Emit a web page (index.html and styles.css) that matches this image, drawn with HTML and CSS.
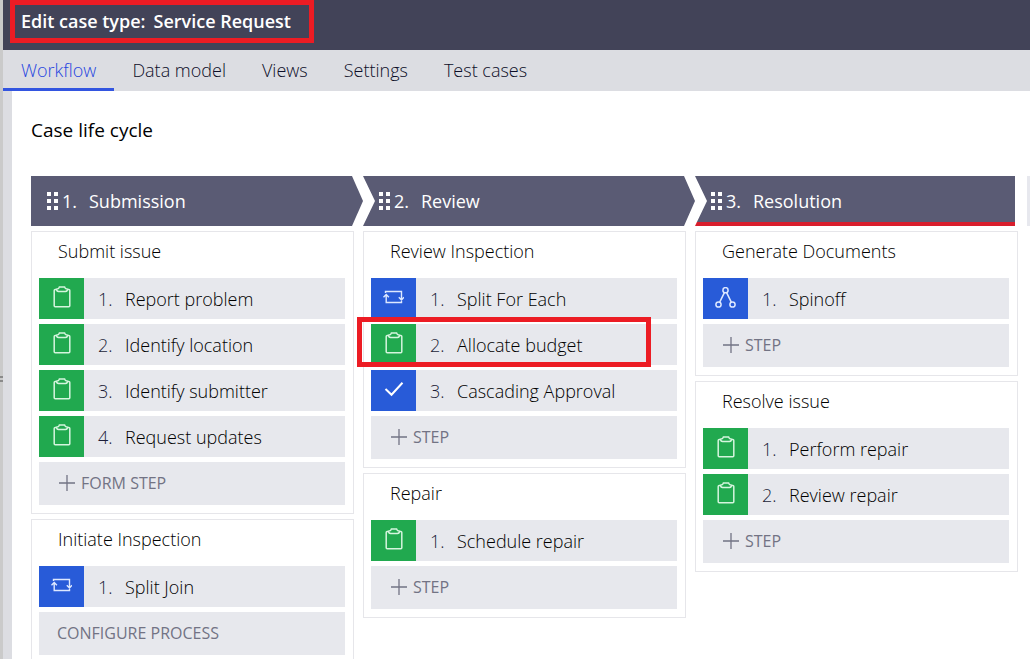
FILE: index.html
```html
<!DOCTYPE html>
<html lang="en">
<head>
    <meta charset="UTF-8">
    <meta name="viewport" content="width=device-width, initial-scale=1.0">
    <title>Edit case type: Service Request</title>
    <link rel="stylesheet" href="styles.css">
</head>
<body>
    <!-- shared icons -->
    <svg class="sprite" aria-hidden="true">
        <symbol id="clipboard" viewBox="0 0 18 22">
            <path d="M3.6 3.5H2.2Q1.2 3.5 1.2 4.5V19.8Q1.2 20.8 2.2 20.8H15.8Q16.8 20.8 16.8 19.8V4.5Q16.8 3.5 15.8 3.5H14.4"/>
            <path d="M3.6 3.2Q6 2.8 6.4 1.1H11.6Q12 2.8 14.4 3.2Q14.4 5.3 12.4 5.5H5.6Q3.6 5.3 3.6 3.2Z"/>
        </symbol>
        <symbol id="loop" viewBox="0 0 21 14">
            <path d="M2.5 3V1.5H18.5V9.5M15.8 7.2L18.5 10L21 7.2M18.5 11V12.5H3.2V4.5M0.5 7.2L3.2 4.4L5.9 7.2"/>
        </symbol>
        <symbol id="spinoff" viewBox="0 0 21 21">
            <circle cx="10.5" cy="3.2" r="2.6"/>
            <circle cx="3.5" cy="17.5" r="2.6"/>
            <circle cx="17.5" cy="17.5" r="2.6"/>
            <path d="M9.4 5.6L4.7 15.2M11.6 5.6L16.3 15.2"/>
        </symbol>
        <symbol id="check" viewBox="0 0 20 16">
            <path d="M1.5 8L7.5 13.7L18.5 1.7"/>
        </symbol>
        <symbol id="plus" viewBox="0 0 16 16">
            <path d="M8 0V16M0 8H16"/>
        </symbol>
        <symbol id="grip" viewBox="0 0 11 18">
            <path d="M0 0h4v4H0zM7 0h4v4H7zM0 7h4v4H0zM7 7h4v4H7zM0 14h4v4H0zM7 14h4v4H7z"/>
        </symbol>
    </svg>

    <div class="splitter"><span class="splitter-handle"></span></div>

    <div class="app">
        <header class="header">
            <h1 class="title marked">Edit case type: <span class="case-name">Service Request</span></h1>
        </header>

        <nav class="tabs">
            <a class="tab active" href="#workflow">Workflow</a>
            <a class="tab" href="#data-model">Data model</a>
            <a class="tab" href="#views">Views</a>
            <a class="tab" href="#settings">Settings</a>
            <a class="tab" href="#test-cases">Test cases</a>
        </nav>

        <main class="content" id="workflow">
            <h2 class="section-title">Case life cycle</h2>

            <div class="stages">
                <section class="stage">
                    <h3 class="stage-name first"><svg class="grip"><use href="#grip"/></svg><span class="stage-num">1.</span>Submission</h3>
                    <div class="process">
                        <h4>Submit issue</h4>
                        <ol>
                            <li><a class="step" href="#"><span class="tile green"><svg class="clipboard"><use href="#clipboard"/></svg></span><span class="num">1.</span>Report problem</a></li>
                            <li><a class="step" href="#"><span class="tile green"><svg class="clipboard"><use href="#clipboard"/></svg></span><span class="num">2.</span>Identify location</a></li>
                            <li><a class="step" href="#"><span class="tile green"><svg class="clipboard"><use href="#clipboard"/></svg></span><span class="num">3.</span>Identify submitter</a></li>
                            <li><a class="step" href="#"><span class="tile green"><svg class="clipboard"><use href="#clipboard"/></svg></span><span class="num">4.</span>Request updates</a></li>
                        </ol>
                        <button class="add"><svg class="plus"><use href="#plus"/></svg>FORM STEP</button>
                    </div>
                    <div class="process">
                        <h4>Initiate Inspection</h4>
                        <ol>
                            <li><a class="step" href="#"><span class="tile blue"><svg class="loop"><use href="#loop"/></svg></span><span class="num">1.</span>Split Join</a></li>
                        </ol>
                        <button class="add">CONFIGURE PROCESS</button>
                    </div>
                </section>

                <section class="stage">
                    <h3 class="stage-name middle"><svg class="grip"><use href="#grip"/></svg><span class="stage-num">2.</span>Review</h3>
                    <div class="process">
                        <h4>Review Inspection</h4>
                        <ol>
                            <li><a class="step" href="#"><span class="tile blue"><svg class="loop"><use href="#loop"/></svg></span><span class="num">1.</span>Split For Each</a></li>
                            <li><a class="step marked-step" href="#"><span class="tile green"><svg class="clipboard"><use href="#clipboard"/></svg></span><span class="num">2.</span>Allocate budget</a></li>
                            <li><a class="step" href="#"><span class="tile blue"><svg class="check"><use href="#check"/></svg></span><span class="num">3.</span>Cascading Approval</a></li>
                        </ol>
                        <button class="add"><svg class="plus"><use href="#plus"/></svg>STEP</button>
                    </div>
                    <div class="process">
                        <h4>Repair</h4>
                        <ol>
                            <li><a class="step" href="#"><span class="tile green"><svg class="clipboard"><use href="#clipboard"/></svg></span><span class="num">1.</span>Schedule repair</a></li>
                        </ol>
                        <button class="add"><svg class="plus"><use href="#plus"/></svg>STEP</button>
                    </div>
                </section>

                <section class="stage">
                    <h3 class="stage-name last"><svg class="grip"><use href="#grip"/></svg><span class="stage-num">3.</span>Resolution</h3>
                    <div class="process">
                        <h4>Generate Documents</h4>
                        <ol>
                            <li><a class="step" href="#"><span class="tile blue"><svg class="spinoff"><use href="#spinoff"/></svg></span><span class="num">1.</span>Spinoff</a></li>
                        </ol>
                        <button class="add"><svg class="plus"><use href="#plus"/></svg>STEP</button>
                    </div>
                    <div class="process">
                        <h4>Resolve issue</h4>
                        <ol>
                            <li><a class="step" href="#"><span class="tile green"><svg class="clipboard"><use href="#clipboard"/></svg></span><span class="num">1.</span>Perform repair</a></li>
                            <li><a class="step" href="#"><span class="tile green"><svg class="clipboard"><use href="#clipboard"/></svg></span><span class="num">2.</span>Review repair</a></li>
                        </ol>
                        <button class="add"><svg class="plus"><use href="#plus"/></svg>STEP</button>
                    </div>
                </section>

                <div class="next-stage"></div>
            </div>
        </main>
    </div>
</body>
</html>
```
FILE: styles.css
```css
* {
    box-sizing: border-box;
}
body {
    display: flex;
    height: 100vh;
    margin: 0;
    font-family: "Open Sans", "Noto Sans", sans-serif;
    font-size: 18px;
    font-weight: 300;
    line-height: 24px;
    color: #000;
    background: #fff;
}
h1, h2, h3, h4, ol {
    margin: 0;
    padding: 0;
}
a {
    color: inherit;
    text-decoration: none;
}
svg {
    flex: none;
    fill: none;
    stroke: currentColor;
}
.sprite {
    display: none;
}

/* left splitter */
.splitter {
    flex: none;
    width: 3px;
    padding-top: 57vh;
    background: #cacaca;
}
.splitter-handle {
    display: block;
    height: 6px;
    border: solid #8a8a8a;
    border-width: 2px 0;
}

.app {
    flex: 1;
    min-width: 0;
    display: flex;
    flex-direction: column;
}
.header {
    flex: none;
    height: 50px;
    padding-left: 7px;
    background: #424358;
}
.title {
    display: inline-flex;
    align-items: center;
    gap: 8px;
    height: 43px;
    padding: 0 18px 2px 6px;
    font-size: 18px;
    font-weight: 600;
    color: #fff;
}
.marked {
    border: 5px solid #ec1c24;
}

.tabs {
    flex: none;
    display: flex;
    height: 41px;
    background: #dcdde2;
}
.tab {
    padding: 8px 18px 0;
    color: #0c0e28;
}
.tab.active {
    color: #1f45e0;
    border-bottom: 3px solid #3355e0;
}

.content {
    flex: 1;
    min-height: 0;
    padding: 27px 0 0 19px;
    border-left: 9px solid #dcdde2;
    overflow: auto;
    scrollbar-width: none;
}
.section-title {
    margin-bottom: 34px;
    font-size: 19px;
    font-weight: 500;
    color: #000;
}
.stages {
    display: grid;
    grid-template-columns: repeat(3, 1fr) 3px;
    gap: 9px;
}

/* chevron headers, each point reaches into the gap */
.stage-name {
    display: flex;
    align-items: center;
    height: 50px;
    margin-bottom: 5px;
    padding-left: 16px;
    font-size: 18px;
    font-weight: 400;
    color: #fff;
    background: #5a5b74;
}
.stage-name.first {
    margin-right: -9px;
    clip-path: polygon(0 0, calc(100% - 11px) 0, 100% 50%, calc(100% - 11px) 100%, 0 100%);
}
.stage-name.middle {
    margin-right: -9px;
    clip-path: polygon(0 0, calc(100% - 11px) 0, 100% 50%, calc(100% - 11px) 100%, 0 100%, 12px 50%);
}
.stage-name.last {
    margin-right: 3px;
    background: linear-gradient(to top, #d81e2c 4px, #5a5b74 4px);
    clip-path: polygon(0 0, 100% 0, 100% 100%, 0 100%, 12px 50%);
}
.grip {
    width: 11px;
    height: 18px;
    fill: #fff;
    stroke: none;
}
.stage-num {
    width: 31px;
    padding-left: 4px;
}
.next-stage {
    height: 50px;
    background: #e7e8ee;
}

.process {
    margin-bottom: 5px;
    padding: 0 8px 8px 7px;
    border: 1px solid #e6e6ea;
}
.process h4 {
    height: 46px;
    padding: 7px 0 0 19px;
    font-size: 18px;
    font-weight: inherit;
}
.process ol {
    list-style: none;
}
.step {
    position: relative;
    display: flex;
    align-items: center;
    height: 41px;
    margin-bottom: 5px;
    background: #e7e8ed;
}
.tile {
    display: flex;
    align-items: center;
    justify-content: center;
    width: 45px;
    height: 100%;
    padding: 0 0 3px;
    color: #fff;
}
.green {
    background: #21a94f;
}
.blue {
    background: #285bd8;
}
.num {
    width: 41px;
    padding-left: 14px;
    color: #1c1d38;
}
.clipboard {
    width: 18px;
    height: 22px;
    color: #d5f5de;
    stroke-width: 1.5;
}
.loop {
    width: 21px;
    height: 14px;
    color: #dde8ff;
    stroke-width: 1.4;
}
.spinoff {
    width: 21px;
    height: 21px;
    color: #dde8ff;
    stroke-width: 1.5;
}
.check {
    width: 20px;
    height: 16px;
    stroke-width: 2;
}
.plus {
    width: 16px;
    height: 16px;
    margin-left: 2px;
    stroke-width: 1.3;
}
.add {
    display: flex;
    align-items: center;
    gap: 6px;
    width: 100%;
    height: 43px;
    padding: 0 18px 2px;
    border: none;
    font-family: inherit;
    font-size: 16px;
    font-weight: 400;
    color: #727384;
    background: #e7e8ed;
    cursor: pointer;
}
.add:hover {
    background: #dcdde2;
}

/* callout frame drawn over the step */
.marked-step::after {
    content: "";
    position: absolute;
    top: -7px;
    right: 26px;
    bottom: -2px;
    left: -14px;
    border: 5px solid #ec1c24;
    z-index: 1;
}
```
